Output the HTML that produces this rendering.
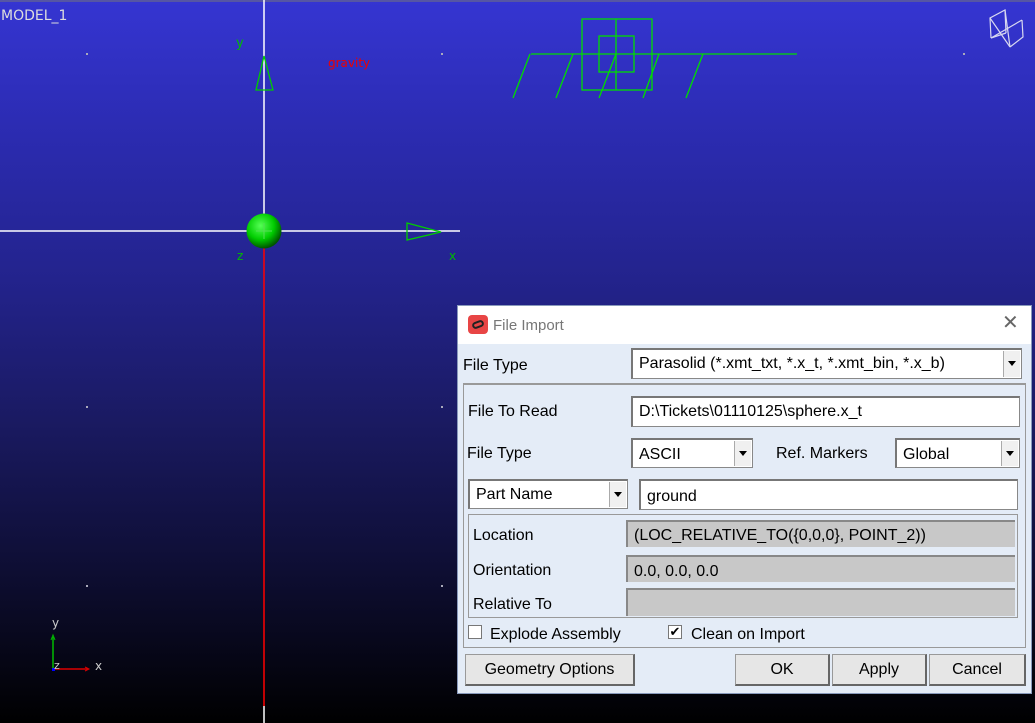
<!DOCTYPE html>
<html><head><meta charset="utf-8"><style>
*{margin:0;padding:0;box-sizing:border-box}
body{width:1035px;height:723px;overflow:hidden;position:relative;font-family:"Liberation Sans",Arial,sans-serif;
background:linear-gradient(#3535d2 0px,#2c2cb4 120px,#23238c 280px,#1a1a62 420px,#0e0e33 570px,#08081c 640px,#000 723px)}
.a{position:absolute}
.lbl{position:absolute;font-size:16px;color:#000;line-height:18px}
.sel,.inp{position:absolute;background:#fff;border:1px solid #888;border-top:2px solid #777;border-left:2px solid #777;font-size:16px;padding-left:6px;line-height:28px;color:#000}
.sel .dd{position:absolute;right:1px;top:1px;bottom:1px;width:17px;background:#f0f0f0;border-left:1px solid #aaa}
.sel .dd:after{content:"";position:absolute;left:4px;top:10px;border-left:4px solid transparent;border-right:4px solid transparent;border-top:5px solid #000}
.gf{position:absolute;background:#c8c8c8;border-top:2px solid #888;border-left:2px solid #888;font-size:16px;padding-left:6px;line-height:28px;color:#000}
.btn{position:absolute;background:#e6e6e6;border:1px solid #999;border-right:2px solid #666;border-bottom:2px solid #666;font-size:16px;text-align:center;line-height:29px;color:#000}
.cb{position:absolute;width:14px;height:14px;background:#fff;border:1px solid #777}
</style></head><body>
<svg class="a" style="left:0;top:0" width="1035" height="723">
<line x1="0" y1="1" x2="1035" y2="1" stroke="#777" stroke-width="1"/>
<line x1="264" y1="0" x2="264" y2="232" stroke="#fff" stroke-width="1.5"/>
<line x1="0" y1="231" x2="460" y2="231" stroke="#fff" stroke-width="1.5"/>
<line x1="264" y1="240" x2="264" y2="706" stroke="#f00" stroke-width="1.5"/>
<line x1="264" y1="706" x2="264" y2="723" stroke="#fff" stroke-width="1.5"/>
<polygon points="264,56 256,90 273,90" fill="none" stroke="#0c0" stroke-width="1.3"/>
<polygon points="407,223 441,232 407,240" fill="none" stroke="#0c0" stroke-width="1.3"/>
<defs><radialGradient id="g" cx="0.4" cy="0.35" r="0.65"><stop offset="0" stop-color="#5f5"/><stop offset="0.6" stop-color="#0c0"/><stop offset="1" stop-color="#050"/></radialGradient></defs>
<circle cx="264" cy="231" r="17.5" fill="url(#g)"/>
<line x1="256" y1="231" x2="272" y2="231" stroke="#5d5" stroke-width="1"/>
<line x1="264" y1="223" x2="264" y2="239" stroke="#5d5" stroke-width="1"/>
<text x="236" y="47" fill="#0b0" font-size="13" font-family="DejaVu Sans">y</text>
<text x="237" y="260" fill="#0b0" font-size="12" font-family="DejaVu Sans">z</text>
<text x="449" y="260" fill="#0b0" font-size="12" font-family="DejaVu Sans">x</text>
<text x="328" y="67" fill="#e00" font-size="12" font-family="DejaVu Sans">gravity</text>
<text x="1" y="20" fill="#ddd" font-size="14" font-family="DejaVu Sans">MODEL_1</text>
<g stroke="#0d0" stroke-width="1.3" fill="none">
<line x1="531" y1="54" x2="797" y2="54"/>
<rect x="582" y="19" width="70" height="71"/>
<rect x="599" y="36" width="35" height="36"/>
<line x1="616" y1="19" x2="616" y2="90"/>
<line x1="530" y1="54" x2="513" y2="98"/><line x1="573" y1="54" x2="556" y2="98"/><line x1="616" y1="54" x2="599" y2="98"/><line x1="659" y1="54" x2="643" y2="98"/><line x1="703" y1="54" x2="686" y2="98"/>
</g>
<g stroke="#d8d8f0" stroke-width="1.2" fill="none">
<polyline points="991,38 990,18 1005,10 1006,33"/>
<line x1="1005" y1="10" x2="1010" y2="47"/>
<line x1="990" y1="18" x2="1010" y2="47"/>
<line x1="991" y1="38" x2="1022" y2="20"/>
<polyline points="1022,20 1023,37 1010,47"/>
<line x1="991" y1="38" x2="1006" y2="33"/>
</g>
<g fill="#aab"><rect x="86" y="53" width="2" height="2"/><rect x="441" y="53" width="2" height="2"/><rect x="963" y="53" width="2" height="2"/><rect x="86" y="406" width="2" height="2"/><rect x="441" y="406" width="2" height="2"/><rect x="86" y="585" width="2" height="2"/><rect x="441" y="585" width="2" height="2"/></g>
<line x1="53" y1="669" x2="53" y2="637" stroke="#0b0" stroke-width="1.5"/>
<polyline points="51,640 53,635 55,640" stroke="#0b0" fill="none"/>
<line x1="54" y1="669" x2="88" y2="669" stroke="#d00" stroke-width="1.5"/>
<polyline points="85,667 89,669 85,671" stroke="#d00" fill="none"/>
<rect x="52" y="668" width="3" height="3" fill="#00f"/>
<text x="52" y="627" fill="#ccc" font-size="12" font-family="DejaVu Sans">y</text>
<text x="54" y="669" fill="#ccc" font-size="11" font-family="DejaVu Sans">z</text>
<text x="95" y="670" fill="#ccc" font-size="12" font-family="DejaVu Sans">x</text>
</svg>

<div class="a" style="left:457px;top:305px;width:575px;height:389px;background:#e4ecf7;border:1px solid #8899bb"></div>
<div class="a" style="left:458px;top:306px;width:573px;height:38px;background:#fff"></div>
<div class="a" style="left:468px;top:315px;width:20px;height:19px;background:#e84545;border-radius:4px"></div>
<div class="a" style="left:472px;top:321px;width:12px;height:7px;border:2px solid #222;border-radius:4px;transform:rotate(-20deg)"></div>
<div class="lbl" style="left:493px;top:317px;color:#777;font-size:15px">File Import</div>
<div class="lbl" style="left:1002px;top:314px;color:#666;font-size:20px">✕</div>

<div class="lbl" style="left:463px;top:357px">File Type</div>
<div class="sel" style="left:631px;top:348px;width:391px;height:31px">Parasolid (*.xmt_txt, *.x_t, *.xmt_bin, *.x_b)<div class="dd"></div></div>

<div class="a" style="left:463px;top:383px;width:563px;height:265px;border:1px solid #999;border-top:2px solid #999"></div>
<div class="lbl" style="left:468px;top:403px">File To Read</div>
<div class="inp" style="left:631px;top:396px;width:389px;height:31px">D:\Tickets\01110125\sphere.x_t</div>
<div class="lbl" style="left:467px;top:445px">File Type</div>
<div class="sel" style="left:631px;top:438px;width:122px;height:30px;line-height:29px">ASCII<div class="dd"></div></div>
<div class="lbl" style="left:776px;top:445px">Ref. Markers</div>
<div class="sel" style="left:895px;top:438px;width:125px;height:30px;line-height:29px">Global<div class="dd"></div></div>
<div class="sel" style="left:468px;top:479px;width:160px;height:30px;line-height:27px">Part Name<div class="dd"></div></div>
<div class="inp" style="left:639px;top:479px;width:379px;height:31px;line-height:31px">ground</div>

<div class="a" style="left:468px;top:514px;width:550px;height:104px;border:1px solid #999"></div>
<div class="lbl" style="left:473px;top:527px">Location</div>
<div class="gf" style="left:626px;top:520px;width:389px;height:27px">(LOC_RELATIVE_TO({0,0,0}, POINT_2))</div>
<div class="lbl" style="left:473px;top:562px">Orientation</div>
<div class="gf" style="left:626px;top:555px;width:389px;height:27px;line-height:29px">0.0, 0.0, 0.0</div>
<div class="lbl" style="left:473px;top:596px">Relative To</div>
<div class="gf" style="left:626px;top:588px;width:389px;height:28px"></div>

<div class="cb" style="left:468px;top:625px"></div>
<div class="lbl" style="left:490px;top:626px">Explode Assembly</div>
<div class="cb" style="left:668px;top:625px;font-size:13px;line-height:12px;text-align:center">✔</div>
<div class="lbl" style="left:691px;top:626px">Clean on Import</div>

<div class="btn" style="left:465px;top:654px;width:170px;height:32px">Geometry Options</div>
<div class="btn" style="left:735px;top:654px;width:95px;height:32px">OK</div>
<div class="btn" style="left:832px;top:654px;width:95px;height:32px">Apply</div>
<div class="btn" style="left:929px;top:654px;width:97px;height:32px">Cancel</div>
</body></html>
